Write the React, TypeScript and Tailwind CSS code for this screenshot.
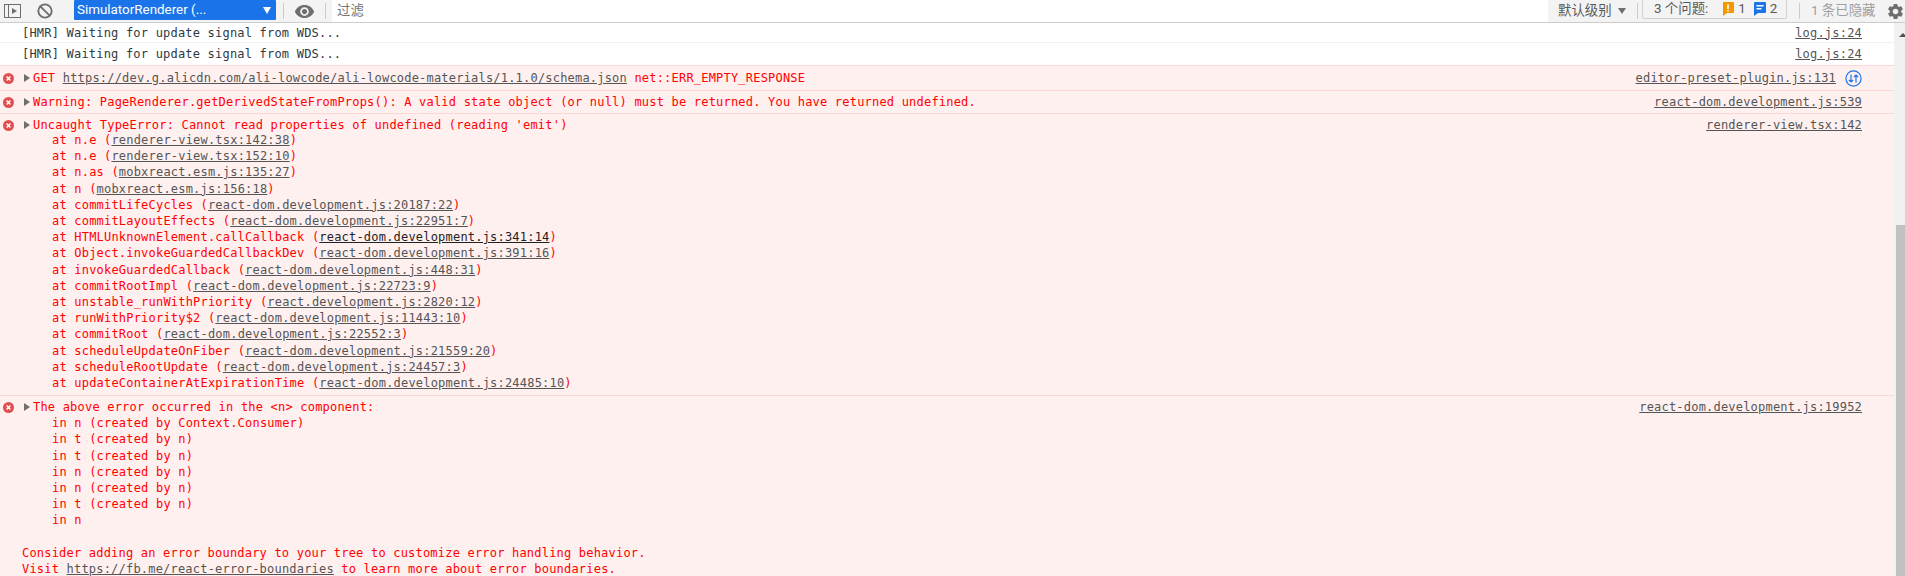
import { Ban } from "lucide-react";
import { MdSettings, MdVisibility } from "react-icons/md";

const mono = "font-['DejaVu_Sans_Mono',monospace] text-[12px] tracking-[0.2px]";
const ui = "font-['Roboto','Noto_Sans_CJK_SC',sans-serif] text-[13.4px]";

const stack: [string, string, string][] = [
  ["n.e", "renderer-view.tsx:142:38", ""],
  ["n.e", "renderer-view.tsx:152:10", ""],
  ["n.as", "mobxreact.esm.js:135:27", ""],
  ["n", "mobxreact.esm.js:156:18", ""],
  ["commitLifeCycles", "react-dom.development.js:20187:22", ""],
  ["commitLayoutEffects", "react-dom.development.js:22951:7", ""],
  ["HTMLUnknownElement.callCallback", "react-dom.development.js:341:14", "dark"],
  ["Object.invokeGuardedCallbackDev", "react-dom.development.js:391:16", ""],
  ["invokeGuardedCallback", "react-dom.development.js:448:31", ""],
  ["commitRootImpl", "react-dom.development.js:22723:9", ""],
  ["unstable_runWithPriority", "react.development.js:2820:12", ""],
  ["runWithPriority$2", "react-dom.development.js:11443:10", ""],
  ["commitRoot", "react-dom.development.js:22552:3", ""],
  ["scheduleUpdateOnFiber", "react-dom.development.js:21559:20", ""],
  ["scheduleRootUpdate", "react-dom.development.js:24457:3", ""],
  ["updateContainerAtExpirationTime", "react-dom.development.js:24485:10", ""],
];

const created = ["n (created by Context.Consumer)", "t (created by n)", "t (created by n)", "n (created by n)", "n (created by n)", "t (created by n)", "n"];

function ErrorIcon() {
  return (
    <svg width="11" height="11" viewBox="0 0 11 11" className="shrink-0">
      <circle cx="5.5" cy="5.5" r="5.5" fill="#e04f4f" />
      <path d="M3.6 3.6l3.8 3.8M7.4 3.6l-3.8 3.8" stroke="#fff" strokeWidth="1.4" />
    </svg>
  );
}

function Caret() {
  return <span className="w-0 h-0 border-y-[4px] border-y-transparent border-l-[6px] border-l-[#6e6e6e] shrink-0" />;
}

function Source({ children }: { children: string }) {
  return <a className="underline text-[#555] shrink-0">{children}</a>;
}

function ToolSep() {
  return <span className="block w-px h-4 bg-[#ccc] shrink-0" />;
}

function PlainRow({ text, source, className }: { text: string; source: string; className: string }) {
  return (
    <div className={`flex items-center justify-between pl-[22px] pr-[32px] text-[#303942] ${className}`}>
      <span>{text}</span>
      <Source>{source}</Source>
    </div>
  );
}

function ErrorHead({ source, children, icon }: { source: string; children: React.ReactNode; icon?: boolean }) {
  return (
    <div className="flex items-center h-[16px]">
      <span className="w-[24px] shrink-0 flex pl-[3px]"><ErrorIcon /></span>
      <Caret />
      <span className="ml-[3px] flex-1 whitespace-pre">{children}</span>
      <Source>{source}</Source>
      {icon && (
        <svg width="17" height="17" viewBox="0 0 17 17" className="ml-[9px] shrink-0">
          <circle cx="8.5" cy="8.5" r="7.6" fill="none" stroke="#1a73e8" strokeWidth="1.2" />
          <path d="M6 4.5v7.5M3.8 9.8L6 12l2.2-2.2M11 12.5V5M8.8 7.2L11 5l2.2 2.2" fill="none" stroke="#1a73e8" strokeWidth="1.2" />
        </svg>
      )}
    </div>
  );
}

export default function App() {
  return (
    <div className="w-[1905px] h-[576px] overflow-hidden bg-white flex flex-col">
      <div className={`h-[23px] shrink-0 flex items-center bg-[#f3f3f3] border-b border-[#ccc] text-[#5a5a5a] ${ui}`}>
        <svg width="17" height="14" viewBox="0 0 17 14" className="ml-[4px] shrink-0">
          <rect x="0.5" y="0.5" width="16" height="13" fill="none" stroke="#6e6e6e" />
          <path d="M4.5 1v12" stroke="#6e6e6e" />
          <path d="M8 4l5 3-5 3z" fill="#6e6e6e" />
        </svg>
        <Ban size={16} strokeWidth={2.8} className="ml-[16px] text-[#6e6e6e] shrink-0" />
        <span className="ml-[21px] w-[202px] h-[20px] flex items-center justify-between bg-[#1a73e8] text-white pl-[3px] pr-[3px] rounded-[1px] self-start">
          SimulatorRenderer (...
          <span className="w-0 h-0 border-x-[4px] border-x-transparent border-t-[7px] border-t-white mr-[2px]" />
        </span>
        <span className="ml-[7px]"><ToolSep /></span>
        <MdVisibility size={21} color="#6e6e6e" className="ml-[10px] shrink-0" />
        <span className="ml-[10px]"><ToolSep /></span>
        <span className="ml-[6px] w-[1216px] h-[22px] flex items-center bg-white pl-[5px] text-[#757575]">过滤</span>
        <span className="ml-[10px] w-[79px] flex items-center whitespace-nowrap">默认级别<span className="ml-[6px] w-0 h-0 border-x-[4px] border-x-transparent border-t-[6px] border-t-[#6e6e6e]" /></span>
        <ToolSep />
        <span className="ml-[4px] h-[19px] w-[145px] self-start flex items-center border border-t-0 border-[#d0d0d0] rounded-b-[2px] pl-[11px] whitespace-nowrap">
          3 个问题:
          <svg width="12" height="14" viewBox="0 0 12 14" className="ml-[14px] shrink-0">
            <path d="M1 0h10a1 1 0 0 1 1 1v9a1 1 0 0 1-1 1H5l-4 3V1z" fill="#f29900" />
            <path d="M5.2 2.2h1.6v4.8H5.2zM5.2 8h1.6v1.6H5.2z" fill="#fff" />
          </svg>
          <span className="ml-[4px]">1</span>
          <svg width="12" height="14" viewBox="0 0 12 14" className="ml-[8px] shrink-0">
            <path d="M1 0h10a1 1 0 0 1 1 1v9a1 1 0 0 1-1 1H4l-4 3V1a1 1 0 0 1 1-1z" fill="#1a73e8" />
            <path d="M2.5 3h7v1.4h-7zM2.5 6h5v1.4h-5z" fill="#fff" />
          </svg>
          <span className="ml-[4px]">2</span>
        </span>
        <span className="ml-[12px]"><ToolSep /></span>
        <span className="ml-[11px] w-[64px] text-[#a0a0a0] whitespace-nowrap">1 条已隐藏</span>
        <MdSettings size={19} color="#6e6e6e" className="ml-[11px] shrink-0" />
      </div>

      <div className="flex flex-1 min-h-0">
        <div className={`flex-1 min-w-0 ${mono}`}>
          <PlainRow text="[HMR] Waiting for update signal from WDS..." source="log.js:24" className="h-[20px] border-b border-[#f0f0f0]" />
          <PlainRow text="[HMR] Waiting for update signal from WDS..." source="log.js:24" className="h-[22px]" />
          <div className="bg-[#fff0f0] text-[#ff0000]">
            <div className="border-y border-[#ffd6d6] pt-[4px] pb-[4px] pr-[32px]">
              <ErrorHead source="editor-preset-plugin.js:131" icon>
                GET <a className="underline text-[#555]">https://dev.g.alicdn.com/ali-lowcode/ali-lowcode-materials/1.1.0/schema.json</a> net::ERR_EMPTY_RESPONSE
              </ErrorHead>
            </div>
            <div className="border-b border-[#ffd6d6] pt-[3px] pb-[3px] pr-[32px]">
              <ErrorHead source="react-dom.development.js:539">
                Warning: PageRenderer.getDerivedStateFromProps(): A valid state object (or null) must be returned. You have returned undefined.
              </ErrorHead>
            </div>
            <div className="border-b border-[#ffd6d6] pt-[3px] pb-[4px] pr-[32px]">
              <ErrorHead source="renderer-view.tsx:142">
                Uncaught TypeError: Cannot read properties of undefined (reading 'emit')
              </ErrorHead>
              <div className="-mt-[1px] pl-[52px] leading-[16.2px] whitespace-pre">
                {stack.map(([fn, src, tone]) => (
                  <div key={src}>
                    at {fn} (<a className={`underline ${tone ? "text-[#222]" : "text-[#555]"}`}>{src}</a>)
                  </div>
                ))}
              </div>
            </div>
            <div className="pt-[3px] pr-[32px]">
              <ErrorHead source="react-dom.development.js:19952">
                The above error occurred in the &lt;n&gt; component:
              </ErrorHead>
              <div className="pl-[52px] leading-[16.2px] whitespace-pre">
                {created.map((c, i) => <div key={i}>in {c}</div>)}
              </div>
              <div className="pl-[22px] leading-[16px] mt-[16px] whitespace-pre">
                <div>Consider adding an error boundary to your tree to customize error handling behavior.</div>
                <div>Visit <a className="underline text-[#555]">https://fb.me/react-error-boundaries</a> to learn more about error boundaries.</div>
              </div>
            </div>
          </div>
        </div>
        <div className="w-[11px] shrink-0 bg-[#f1f1f1] flex flex-col pt-[10px] overflow-hidden">
          <span className="ml-[5px] w-0 h-0 border-x-[4px] border-x-transparent border-b-[4px] border-b-[#505050]" />
          <span className="mt-[188px] ml-[2px] w-[9px] flex-1 bg-[#c1c1c1]" />
        </div>
      </div>
    </div>
  );
}
